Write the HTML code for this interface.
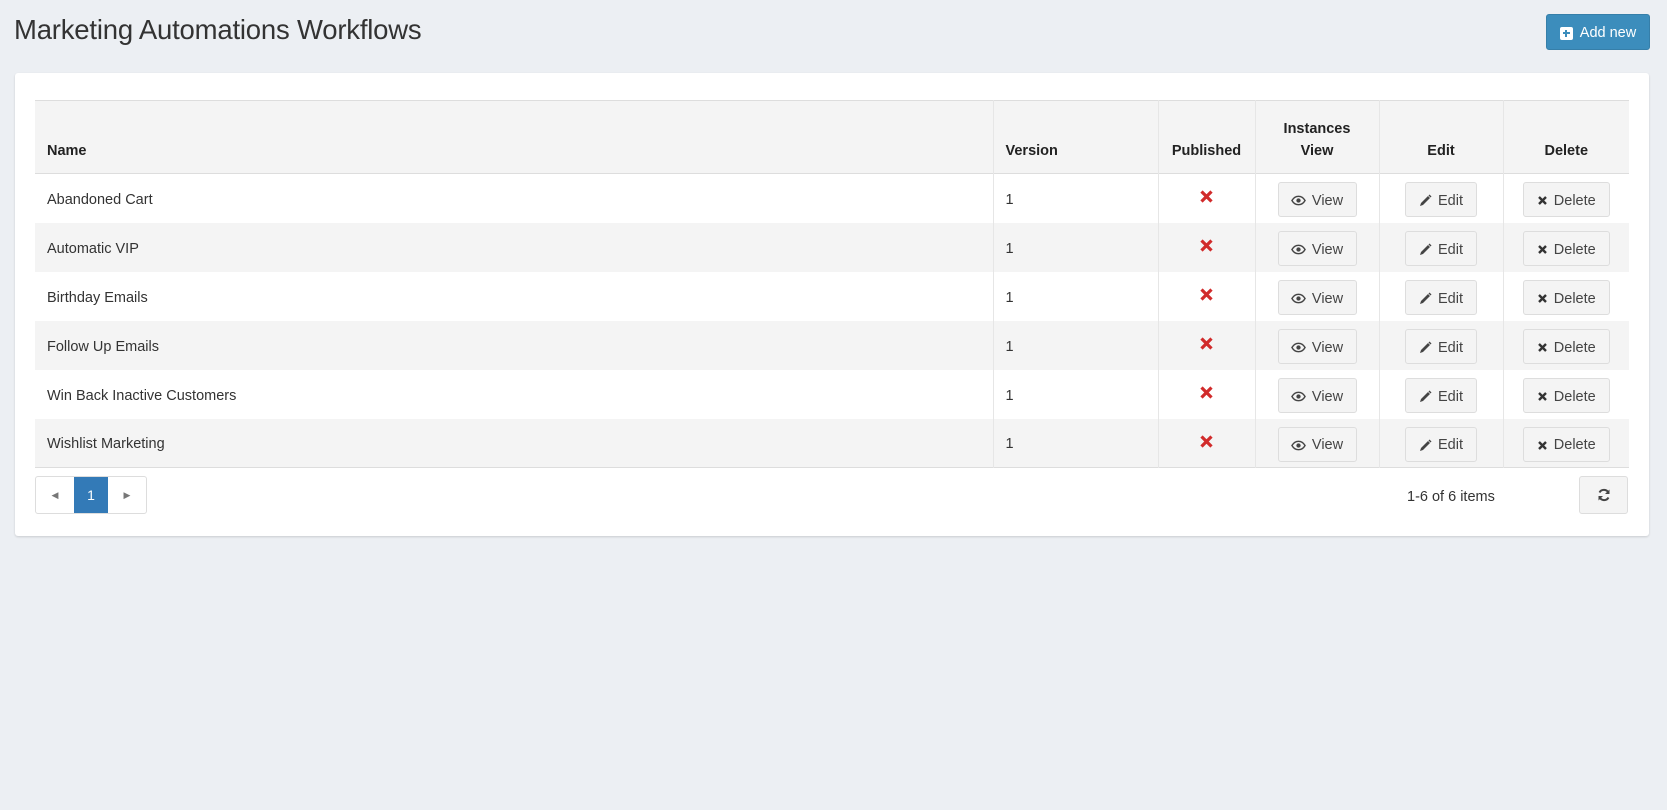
<!DOCTYPE html>
<html><head><style>
*{box-sizing:border-box;margin:0;padding:0}
body{width:1667px;height:810px;background:#eceff3;font-family:"Liberation Sans",sans-serif;color:#333;position:relative;overflow:hidden}
h1{position:absolute;left:14px;top:14px;font-weight:normal;font-size:27.5px;color:#333;letter-spacing:-0.2px}
.add{position:absolute;left:1546px;top:14px;width:104px;height:36px;background:#3c8dbc;border:1px solid #367fa9;border-radius:3px;color:#fff;font-size:14.5px;display:flex;align-items:center;justify-content:center;gap:7px;padding-top:2px}
.add i{width:13px;height:13px;background:#fff;border-radius:2px;position:relative}
.add i:before{content:"";position:absolute;left:3px;top:5.5px;width:7px;height:2px;background:#3c8dbc}
.add i:after{content:"";position:absolute;left:5.5px;top:3px;width:2px;height:7px;background:#3c8dbc}
.card{position:absolute;left:15px;top:73px;width:1634px;height:463px;background:#fff;border-radius:3px;box-shadow:0 1px 2px rgba(0,0,0,.15)}
table{position:absolute;left:35px;top:100px;width:1594px;border-collapse:collapse;font-size:14.5px}
th,td{border-left:1px solid #e6e6e6;padding:0 12px;text-align:left}
th:first-child,td:first-child{border-left:none}
thead tr{height:73px;background:#f4f4f4;border-top:1px solid #ddd;border-bottom:1px solid #ddd}
th{font-weight:bold;vertical-align:bottom;padding-bottom:14px;color:#222}
tbody tr{height:49px}
td{padding-top:3px}
tbody tr:nth-child(even){background:#f4f4f4}
tbody tr:last-child{border-bottom:1px solid #ddd}
.c{text-align:center}
.btn{display:inline-flex;align-items:center;justify-content:center;gap:6px;height:35px;background:#f4f4f4;border:1px solid #ddd;border-radius:3px;color:#444;font-size:14.5px;padding-top:2px;vertical-align:middle}
.pag{position:absolute;left:35px;top:476px;height:38px;display:flex;border:1px solid #ddd;border-radius:3px;background:#fff;font-size:14px}
.pag div{width:38px;display:flex;align-items:center;justify-content:center;color:#777;font-size:9px}
.pag .a{width:34px;background:#337ab7;color:#fff;font-size:14px}
.info{position:absolute;left:1407px;top:489px;font-size:14.5px;color:#333}
.ref{position:absolute;left:1579px;top:476px;width:49px;height:38px;background:#f4f4f4;border:1px solid #ddd;border-radius:3px;display:flex;align-items:center;justify-content:center}
</style></head><body>
<h1>Marketing Automations Workflows</h1>
<div class="add"><i></i>Add new</div>
<div class="card"></div>
<table>
<colgroup><col style="width:958px"><col style="width:165px"><col style="width:97px"><col style="width:124px"><col style="width:124px"><col style="width:126px"></colgroup>
<thead><tr><th>Name</th><th>Version</th><th class="c">Published</th><th class="c">Instances<br><span style="display:inline-block;margin-top:6px">View</span></th><th class="c">Edit</th><th class="c">Delete</th></tr></thead>
<tbody>
</tbody></table>
<script>
var names=["Abandoned Cart","Automatic VIP","Birthday Emails","Follow Up Emails","Win Back Inactive Customers","Wishlist Marketing"];
var rx='<svg width="15" height="15" viewBox="0 0 15 15" style="vertical-align:middle;margin-top:-6px"><path d="M2.5 2.5l10 10M12.5 2.5l-10 10" stroke="#d12b2b" stroke-width="3.2"/></svg>';
var eye='<svg width="15" height="11" viewBox="0 0 16 11"><path d="M1 5.5C3 2 5.5 1 8 1s5 1 7 4.5C13 9 10.5 10 8 10S3 9 1 5.5z" fill="none" stroke="#444" stroke-width="1.5"/><circle cx="8" cy="5.5" r="2.3" fill="#444"/></svg>';
var pen='<svg width="13" height="13" viewBox="0 0 13 13"><path d="M2 9l7-7 2 2-7 7-3 1z" fill="#444"/><path d="M9.5 1.5l1-1 2 2-1 1z" fill="#444"/></svg>';
var xx='<svg width="11" height="11" viewBox="0 0 11 11"><path d="M2 2l7 7M9 2l-7 7" stroke="#333" stroke-width="2.4"/></svg>';
var h='';names.forEach(function(n){h+='<tr><td>'+n+'</td><td>1</td><td class="c">'+rx+'</td><td class="c"><span class="btn" style="width:79px">'+eye+'View</span></td><td class="c"><span class="btn" style="width:72px">'+pen+'Edit</span></td><td class="c"><span class="btn" style="width:87px">'+xx+' Delete</span></td></tr>';});
document.querySelector('tbody').innerHTML=h;
</script>
<div class="pag"><div>&#9664;</div><div class="a">1</div><div>&#9654;</div></div>
<div class="info">1-6 of 6 items</div>
<div class="ref"><svg width="14" height="14" viewBox="0 0 14 14"><path d="M11.5 5A5 5 0 0 0 2.5 4.5M2.5 9a5 5 0 0 0 9 .5" fill="none" stroke="#444" stroke-width="2"/><path d="M12.5 1.5v4.5H8z" fill="#444"/><path d="M1.5 12.5V8H6z" fill="#444"/></svg></div>
</body></html>
